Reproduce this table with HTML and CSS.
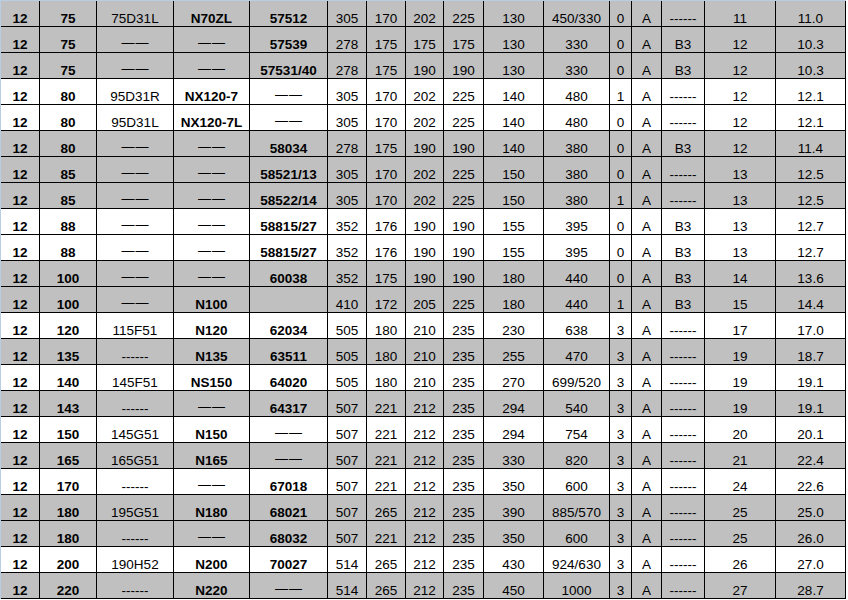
FILE: index.html
```html
<!DOCTYPE html>
<html>
<head>
<meta charset="utf-8">
<link rel="stylesheet" href="styles.css">
</head>
<body>
<div class="sheet">
  <div class="row g"><div class="c b">12</div><div class="c b">75</div><div class="c">75D31L</div><div class="c b">N70ZL</div><div class="c b">57512</div><div class="c">305</div><div class="c">170</div><div class="c">202</div><div class="c">225</div><div class="c">130</div><div class="c">450/330</div><div class="c">0</div><div class="c">A</div><div class="c">------</div><div class="c">11</div><div class="c">11.0</div></div>
  <div class="row g"><div class="c b">12</div><div class="c b">75</div><div class="c d">——</div><div class="c b d">——</div><div class="c b">57539</div><div class="c">278</div><div class="c">175</div><div class="c">175</div><div class="c">175</div><div class="c">130</div><div class="c">330</div><div class="c">0</div><div class="c">A</div><div class="c">B3</div><div class="c">12</div><div class="c">10.3</div></div>
  <div class="row g"><div class="c b">12</div><div class="c b">75</div><div class="c d">——</div><div class="c b d">——</div><div class="c b">57531/40</div><div class="c">278</div><div class="c">175</div><div class="c">190</div><div class="c">190</div><div class="c">130</div><div class="c">330</div><div class="c">0</div><div class="c">A</div><div class="c">B3</div><div class="c">12</div><div class="c">10.3</div></div>
  <div class="row"><div class="c b">12</div><div class="c b">80</div><div class="c">95D31R</div><div class="c b">NX120-7</div><div class="c b d">——</div><div class="c">305</div><div class="c">170</div><div class="c">202</div><div class="c">225</div><div class="c">140</div><div class="c">480</div><div class="c">1</div><div class="c">A</div><div class="c">------</div><div class="c">12</div><div class="c">12.1</div></div>
  <div class="row"><div class="c b">12</div><div class="c b">80</div><div class="c">95D31L</div><div class="c b">NX120-7L</div><div class="c b d">——</div><div class="c">305</div><div class="c">170</div><div class="c">202</div><div class="c">225</div><div class="c">140</div><div class="c">480</div><div class="c">0</div><div class="c">A</div><div class="c">------</div><div class="c">12</div><div class="c">12.1</div></div>
  <div class="row g"><div class="c b">12</div><div class="c b">80</div><div class="c d">——</div><div class="c b d">——</div><div class="c b">58034</div><div class="c">278</div><div class="c">175</div><div class="c">190</div><div class="c">190</div><div class="c">140</div><div class="c">380</div><div class="c">0</div><div class="c">A</div><div class="c">B3</div><div class="c">12</div><div class="c">11.4</div></div>
  <div class="row g"><div class="c b">12</div><div class="c b">85</div><div class="c d">——</div><div class="c b d">——</div><div class="c b">58521/13</div><div class="c">305</div><div class="c">170</div><div class="c">202</div><div class="c">225</div><div class="c">150</div><div class="c">380</div><div class="c">0</div><div class="c">A</div><div class="c">------</div><div class="c">13</div><div class="c">12.5</div></div>
  <div class="row g"><div class="c b">12</div><div class="c b">85</div><div class="c d">——</div><div class="c b d">——</div><div class="c b">58522/14</div><div class="c">305</div><div class="c">170</div><div class="c">202</div><div class="c">225</div><div class="c">150</div><div class="c">380</div><div class="c">1</div><div class="c">A</div><div class="c">------</div><div class="c">13</div><div class="c">12.5</div></div>
  <div class="row"><div class="c b">12</div><div class="c b">88</div><div class="c d">——</div><div class="c b d">——</div><div class="c b">58815/27</div><div class="c">352</div><div class="c">176</div><div class="c">190</div><div class="c">190</div><div class="c">155</div><div class="c">395</div><div class="c">0</div><div class="c">A</div><div class="c">B3</div><div class="c">13</div><div class="c">12.7</div></div>
  <div class="row"><div class="c b">12</div><div class="c b">88</div><div class="c d">——</div><div class="c b d">——</div><div class="c b">58815/27</div><div class="c">352</div><div class="c">176</div><div class="c">190</div><div class="c">190</div><div class="c">155</div><div class="c">395</div><div class="c">0</div><div class="c">A</div><div class="c">B3</div><div class="c">13</div><div class="c">12.7</div></div>
  <div class="row g"><div class="c b">12</div><div class="c b">100</div><div class="c d">——</div><div class="c b d">——</div><div class="c b">60038</div><div class="c">352</div><div class="c">175</div><div class="c">190</div><div class="c">190</div><div class="c">180</div><div class="c">440</div><div class="c">0</div><div class="c">A</div><div class="c">B3</div><div class="c">14</div><div class="c">13.6</div></div>
  <div class="row g"><div class="c b">12</div><div class="c b">100</div><div class="c d">——</div><div class="c b">N100</div><div class="c b"></div><div class="c">410</div><div class="c">172</div><div class="c">205</div><div class="c">225</div><div class="c">180</div><div class="c">440</div><div class="c">1</div><div class="c">A</div><div class="c">B3</div><div class="c">15</div><div class="c">14.4</div></div>
  <div class="row"><div class="c b">12</div><div class="c b">120</div><div class="c">115F51</div><div class="c b">N120</div><div class="c b">62034</div><div class="c">505</div><div class="c">180</div><div class="c">210</div><div class="c">235</div><div class="c">230</div><div class="c">638</div><div class="c">3</div><div class="c">A</div><div class="c">------</div><div class="c">17</div><div class="c">17.0</div></div>
  <div class="row g"><div class="c b">12</div><div class="c b">135</div><div class="c">------</div><div class="c b">N135</div><div class="c b">63511</div><div class="c">505</div><div class="c">180</div><div class="c">210</div><div class="c">235</div><div class="c">255</div><div class="c">470</div><div class="c">3</div><div class="c">A</div><div class="c">------</div><div class="c">19</div><div class="c">18.7</div></div>
  <div class="row"><div class="c b">12</div><div class="c b">140</div><div class="c">145F51</div><div class="c b">NS150</div><div class="c b">64020</div><div class="c">505</div><div class="c">180</div><div class="c">210</div><div class="c">235</div><div class="c">270</div><div class="c">699/520</div><div class="c">3</div><div class="c">A</div><div class="c">------</div><div class="c">19</div><div class="c">19.1</div></div>
  <div class="row g"><div class="c b">12</div><div class="c b">143</div><div class="c">------</div><div class="c b d">——</div><div class="c b">64317</div><div class="c">507</div><div class="c">221</div><div class="c">212</div><div class="c">235</div><div class="c">294</div><div class="c">540</div><div class="c">3</div><div class="c">A</div><div class="c">------</div><div class="c">19</div><div class="c">19.1</div></div>
  <div class="row"><div class="c b">12</div><div class="c b">150</div><div class="c">145G51</div><div class="c b">N150</div><div class="c b d">——</div><div class="c">507</div><div class="c">221</div><div class="c">212</div><div class="c">235</div><div class="c">294</div><div class="c">754</div><div class="c">3</div><div class="c">A</div><div class="c">------</div><div class="c">20</div><div class="c">20.1</div></div>
  <div class="row g"><div class="c b">12</div><div class="c b">165</div><div class="c">165G51</div><div class="c b">N165</div><div class="c b d">——</div><div class="c">507</div><div class="c">221</div><div class="c">212</div><div class="c">235</div><div class="c">330</div><div class="c">820</div><div class="c">3</div><div class="c">A</div><div class="c">------</div><div class="c">21</div><div class="c">22.4</div></div>
  <div class="row"><div class="c b">12</div><div class="c b">170</div><div class="c">------</div><div class="c b d">——</div><div class="c b">67018</div><div class="c">507</div><div class="c">221</div><div class="c">212</div><div class="c">235</div><div class="c">350</div><div class="c">600</div><div class="c">3</div><div class="c">A</div><div class="c">------</div><div class="c">24</div><div class="c">22.6</div></div>
  <div class="row g"><div class="c b">12</div><div class="c b">180</div><div class="c">195G51</div><div class="c b">N180</div><div class="c b">68021</div><div class="c">507</div><div class="c">265</div><div class="c">212</div><div class="c">235</div><div class="c">390</div><div class="c">885/570</div><div class="c">3</div><div class="c">A</div><div class="c">------</div><div class="c">25</div><div class="c">25.0</div></div>
  <div class="row g"><div class="c b">12</div><div class="c b">180</div><div class="c">------</div><div class="c b d">——</div><div class="c b">68032</div><div class="c">507</div><div class="c">221</div><div class="c">212</div><div class="c">235</div><div class="c">350</div><div class="c">600</div><div class="c">3</div><div class="c">A</div><div class="c">------</div><div class="c">25</div><div class="c">26.0</div></div>
  <div class="row"><div class="c b">12</div><div class="c b">200</div><div class="c">190H52</div><div class="c b">N200</div><div class="c b">70027</div><div class="c">514</div><div class="c">265</div><div class="c">212</div><div class="c">235</div><div class="c">430</div><div class="c">924/630</div><div class="c">3</div><div class="c">A</div><div class="c">------</div><div class="c">26</div><div class="c">27.0</div></div>
  <div class="row g"><div class="c b">12</div><div class="c b">220</div><div class="c">------</div><div class="c b">N220</div><div class="c b d">——</div><div class="c">514</div><div class="c">265</div><div class="c">212</div><div class="c">235</div><div class="c">450</div><div class="c">1000</div><div class="c">3</div><div class="c">A</div><div class="c">------</div><div class="c">27</div><div class="c">28.7</div></div>
</div>
</body>
</html>
```
FILE: styles.css
```css
html, body {
  margin: 0;
  padding: 0;
  background: #ffffff;
}
.sheet {
  width: 845px;
  border-top: 1px solid #b9cde5;
  border-left: 1px solid #b9cde5;
  font-family: "Liberation Sans", Arial, sans-serif;
  font-size: 13.5px;
  color: #000;
}
.row {
  display: grid;
  grid-template-columns: 39px 57px 77px 76px 78px 39px 39px 38px 40px 60px 66px 22px 30px 43px 71px 70px;
  background: #ffffff;
}
.row.g {
  background: #c0c0c0;
}
.c {
  box-sizing: border-box;
  height: 26px;
  border-right: 1px solid #000;
  border-bottom: 1px solid #000;
  display: flex;
  align-items: flex-end;
  justify-content: center;
  line-height: 15px;
  padding-bottom: 0;
  white-space: nowrap;
  overflow: hidden;
}
.b {
  font-weight: bold;
}
.d {
  font-weight: normal;
  font-size: 13px;
  letter-spacing: 1px;
  padding-left: 1px;
  padding-bottom: 2px;
}
```
